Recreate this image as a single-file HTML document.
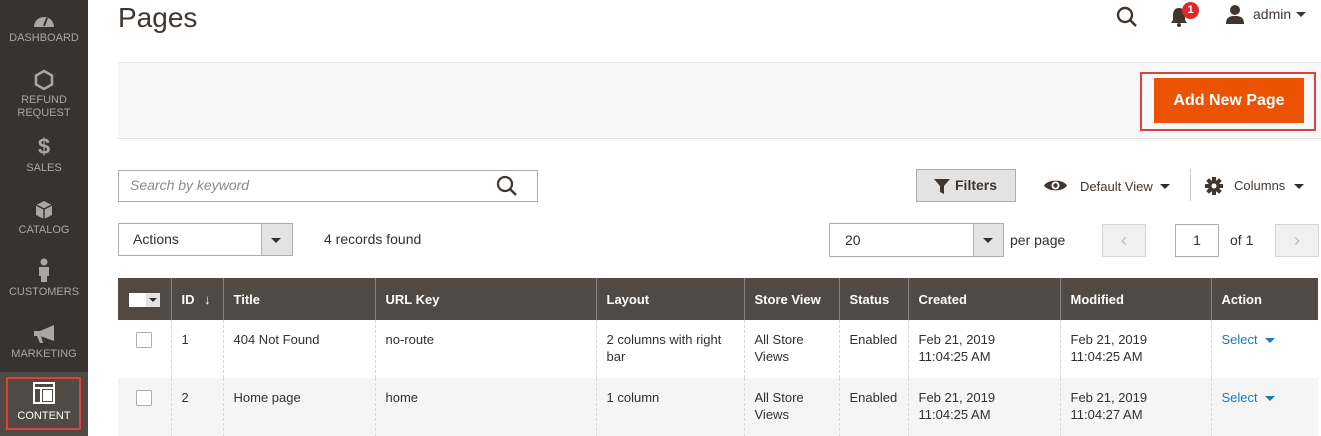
<!DOCTYPE html>
<html><head><meta charset="utf-8"><style>
*{box-sizing:border-box;margin:0;padding:0}
body{width:1321px;height:436px;overflow:hidden;background:#fff;font-family:"Liberation Sans",sans-serif;color:#303030;position:relative;font-size:13px}
.a{position:absolute}
.t{position:absolute;line-height:0}
.side{left:0;top:0;width:88px;height:436px;background:#373330}
.nav{position:absolute;left:0;width:88px;text-align:center;color:#aaa6a0;font-size:11px;line-height:13px}
.ic{position:absolute;left:0;width:88px;display:flex;justify-content:center}
table{position:absolute;left:118px;top:278px;width:1200px;border-collapse:collapse;table-layout:fixed}
th{background:#514943;color:#fff;font-weight:bold;text-align:left;height:42px;padding:0 10px;border-left:1px solid #8a837f;font-size:13px}
td{vertical-align:top;padding:11px 10px 0;height:58px;border-left:1px dashed #d6d6d6;font-size:13px;line-height:17px;color:#303030}
tr.r2 td{background:#f5f5f5}
.cb{width:16px;height:16px;border:1px solid #adadad;background:#fff;margin:1px 0 0 8px;border-radius:2px}
.sel{color:#1979c3}
.box{border:1px solid #adadad;background:#fff}
.tri{width:0;height:0;border-left:5px solid transparent;border-right:5px solid transparent;border-top:5px solid #303030;display:inline-block;vertical-align:middle}
</style></head><body>
<div class="a side"></div>
<div class="ic" style="top:12px"><svg width="22" height="16" viewBox="0 0 22 16"><path d="M1 15A10 10 0 0 1 21 15Z" fill="#aaa6a0"/><path d="M11 14L14 6" stroke="#373330" stroke-width="2"/></svg></div>
<div class="nav" style="top:32px">DASHBOARD</div>
<div class="ic" style="top:69px"><svg width="20" height="22" viewBox="0 0 20 22"><path d="M10 2L18 6.5V15.5L10 20L2 15.5V6.5Z" fill="none" stroke="#aaa6a0" stroke-width="2.5"/></svg></div>
<div class="nav" style="top:94px">REFUND<br>REQUEST</div>
<div class="nav" style="top:135px;font-size:22px;font-weight:bold;line-height:24px">$</div>
<div class="nav" style="top:162px">SALES</div>
<div class="ic" style="top:200px"><svg width="20" height="20" viewBox="0 0 20 20"><path d="M2 5L10 1L18 5V15L10 19L2 15Z" fill="#aaa6a0"/><path d="M2 5L10 9L18 5M10 9V19" stroke="#373330" stroke-width="1.5" fill="none"/></svg></div>
<div class="nav" style="top:224px">CATALOG</div>
<div class="ic" style="top:258px"><svg width="14" height="24" viewBox="0 0 14 24"><circle cx="7" cy="4" r="3.5" fill="#aaa6a0"/><path d="M2 9H12V18H10V24H4V18H2Z" fill="#aaa6a0"/></svg></div>
<div class="nav" style="top:286px">CUSTOMERS</div>
<div class="ic" style="top:324px"><svg width="24" height="20" viewBox="0 0 24 20"><path d="M2 7H8L22 1V17L8 12H2Z" fill="#aaa6a0"/><path d="M5 12L8 19H11L9 12Z" fill="#aaa6a0"/></svg></div>
<div class="nav" style="top:348px">MARKETING</div>
<div class="a" style="left:0;top:372px;width:88px;height:64px;background:#514943"></div>
<div class="a" style="left:6px;top:377px;width:75px;height:53px;border:2px solid #e0403a"></div>
<div class="ic" style="top:382px"><svg width="22" height="22" viewBox="0 0 22 22"><rect x="1" y="1" width="20" height="20" fill="none" stroke="#fff" stroke-width="2"/><path d="M1 6H21M8 6V21" stroke="#fff" stroke-width="2"/><rect x="10" y="8" width="9" height="11" fill="#fff"/></svg></div>
<div class="nav" style="top:410px;color:#fff">CONTENT</div>

<div class="a" style="left:118px;top:2px;font-size:28px;color:#41362f">Pages</div>
<svg class="a" style="left:1115px;top:5px" width="24" height="24" viewBox="0 0 24 24"><circle cx="10" cy="10" r="7" fill="none" stroke="#41362f" stroke-width="2.4"/><path d="M15 15L21 21" stroke="#41362f" stroke-width="2.6"/></svg>
<svg class="a" style="left:1170px;top:7px" width="18" height="20" viewBox="0 0 18 20"><path d="M9 1C5 1 3 4 3 8V13L1 16H17L15 13V8C15 4 13 1 9 1Z" fill="#41362f"/><circle cx="9" cy="18" r="2" fill="#41362f"/></svg>
<div class="a" style="left:1182px;top:2px;width:17px;height:17px;border-radius:50%;background:#e22626;color:#fff;font-size:11px;font-weight:bold;text-align:center;line-height:17px">1</div>
<svg class="a" style="left:1225px;top:4px" width="20" height="20" viewBox="0 0 20 20"><circle cx="10" cy="6" r="5" fill="#41362f"/><path d="M1 20C1 13 5 12 10 12S19 13 19 20Z" fill="#41362f"/></svg>
<div class="a" style="left:1253px;top:6px;font-size:14px;color:#41362f">admin</div>
<div class="t" style="left:1296px;top:12px"><div class="tri" style="border-top-color:#41362f"></div></div>

<div class="a" style="left:118px;top:62px;width:1203px;height:77px;background:#f8f8f8;border-top:1px solid #e3e3e3;border-bottom:1px solid #e3e3e3"></div>
<div class="a" style="left:1140px;top:72px;width:176px;height:59px;border:2px solid #d9423d"></div>
<div class="a" style="left:1154px;top:78px;width:150px;height:45px;background:#eb5202;color:#fff;font-size:16px;font-weight:bold;text-align:center;line-height:45px">Add New Page</div>

<div class="a box" style="left:118px;top:170px;width:420px;height:32px"></div>
<div class="a" style="left:130px;top:177px;font-size:14px;font-style:italic;color:#8a8a8a">Search by keyword</div>
<svg class="a" style="left:495px;top:174px" width="24" height="24" viewBox="0 0 24 24"><circle cx="10" cy="10" r="7" fill="none" stroke="#41362f" stroke-width="2.2"/><path d="M15 15L21 21" stroke="#41362f" stroke-width="2.4"/></svg>

<div class="a" style="left:916px;top:169px;width:100px;height:33px;background:#e3e3e3;border:1px solid #adadad"></div>
<svg class="a" style="left:934px;top:179px" width="16" height="15" viewBox="0 0 16 15"><path d="M0 0H16L10 7V15L6 13V7Z" fill="#41362f"/></svg>
<div class="a" style="left:955px;top:177px;font-size:14px;font-weight:bold;color:#41362f">Filters</div>
<svg class="a" style="left:1043px;top:178px" width="25" height="15" viewBox="0 0 25 15"><path d="M1 7.5C5 1 20 1 24 7.5C20 14 5 14 1 7.5Z" fill="#41362f"/><circle cx="12.5" cy="7.5" r="4" fill="#fff"/><circle cx="12.5" cy="7.5" r="2.2" fill="#41362f"/></svg>
<div class="a" style="left:1080px;top:179px;font-size:13px;color:#41362f">Default View</div>
<div class="t" style="left:1160px;top:184px"><div class="tri"></div></div>
<div class="a" style="left:1190px;top:169px;width:1px;height:32px;background:#ccc"></div>
<svg class="a" style="left:1205px;top:177px" width="18" height="18" viewBox="0 0 18 18"><g fill="#41362f"><circle cx="9" cy="9" r="6"/><rect x="7" y="0" width="4" height="18"/><rect x="0" y="7" width="18" height="4"/><rect x="7" y="0" width="4" height="18" transform="rotate(45 9 9)"/><rect x="7" y="0" width="4" height="18" transform="rotate(-45 9 9)"/></g><circle cx="9" cy="9" r="2.5" fill="#fff"/></svg>
<div class="a" style="left:1234px;top:178px;font-size:13px;color:#41362f">Columns</div>
<div class="t" style="left:1294px;top:184px"><div class="tri"></div></div>

<div class="a box" style="left:118px;top:223px;width:175px;height:33px"></div>
<div class="a" style="left:261px;top:224px;width:31px;height:31px;background:#e3e3e3;border-left:1px solid #adadad"></div>
<div class="t" style="left:271px;top:238px"><div class="tri"></div></div>
<div class="a" style="left:133px;top:231px;font-size:14px">Actions</div>
<div class="a" style="left:324px;top:231px;font-size:14px">4 records found</div>

<div class="a box" style="left:829px;top:223px;width:175px;height:34px"></div>
<div class="a" style="left:973px;top:224px;width:30px;height:32px;background:#e3e3e3;border-left:1px solid #adadad"></div>
<div class="t" style="left:983px;top:238px"><div class="tri"></div></div>
<div class="a" style="left:845px;top:232px;font-size:14px">20</div>
<div class="a" style="left:1010px;top:232px;font-size:14px">per page</div>
<div class="a" style="left:1102px;top:224px;width:44px;height:33px;background:#f0f0f0;border:1px solid #d6d6d6;text-align:center;line-height:31px;color:#bbb;font-size:18px">‹</div>
<div class="a box" style="left:1175px;top:224px;width:44px;height:33px;text-align:center;line-height:31px;font-size:14px">1</div>
<div class="a" style="left:1230px;top:232px;font-size:14px">of 1</div>
<div class="a" style="left:1275px;top:224px;width:44px;height:33px;background:#f0f0f0;border:1px solid #d6d6d6;text-align:center;line-height:31px;color:#bbb;font-size:18px">›</div>

<table>
<colgroup><col style="width:53px"><col style="width:52px"><col style="width:152px"><col style="width:221px"><col style="width:148px"><col style="width:95px"><col style="width:69px"><col style="width:152px"><col style="width:151px"><col style="width:107px"></colgroup>
<tr><th style="border-left:none;padding:0 0 0 11px"><span style="display:inline-block;width:31px;height:14px;background:#fff;vertical-align:middle;position:relative"><span style="position:absolute;right:0;top:0;width:14px;height:14px;background:#e3e3e3"></span><span style="position:absolute;right:3px;top:5px;width:0;height:0;border-left:4px solid transparent;border-right:4px solid transparent;border-top:4px solid #303030"></span></span></th>
<th>ID <span style="font-weight:normal;margin-left:6px">↓</span></th><th>Title</th><th>URL Key</th><th>Layout</th><th>Store View</th><th>Status</th><th>Created</th><th>Modified</th><th>Action</th></tr>
<tr><td style="border-left:none"><div class="cb" style="margin-left:8px"></div></td><td>1</td><td>404 Not Found</td><td>no-route</td><td>2 columns with right bar</td><td>All Store Views</td><td>Enabled</td><td>Feb 21, 2019<br>11:04:25 AM</td><td>Feb 21, 2019<br>11:04:25 AM</td><td class="sel">Select <span class="tri" style="border-top-color:#1979c3;margin-left:4px"></span></td></tr>
<tr class="r2"><td style="border-left:none"><div class="cb"></div></td><td>2</td><td>Home page</td><td>home</td><td>1 column</td><td>All Store Views</td><td>Enabled</td><td>Feb 21, 2019<br>11:04:25 AM</td><td>Feb 21, 2019<br>11:04:27 AM</td><td class="sel">Select <span class="tri" style="border-top-color:#1979c3;margin-left:4px"></span></td></tr>
</table>
</body></html>
